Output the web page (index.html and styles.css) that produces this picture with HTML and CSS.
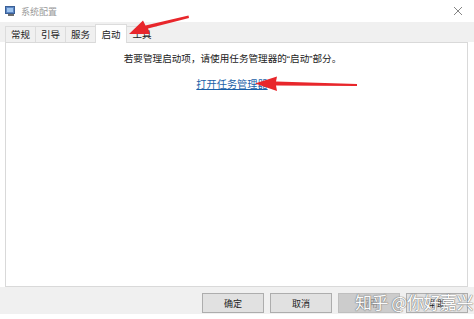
FILE: index.html
```html
<!DOCTYPE html>
<html>
	<head>
		<meta charset="utf-8">
		<title>系统配置</title>
		<link rel="stylesheet" href="styles.css">
	</head>
	<body>
		<div class="win">
			<div class="titlebar">
				<svg class="app_icon" width="11" height="11" viewBox="0 0 11 11">
					<rect x="0.5" y="0.5" width="9" height="7" fill="#5b86c4" stroke="#3a5f95"/>
					<rect x="2" y="2" width="6" height="4" fill="#9cc3ee"/>
					<rect x="3" y="8" width="6" height="2" fill="#6d6d6d"/>
				</svg>
				<span class="title">系统配置</span>
				<svg class="close" width="10" height="10" viewBox="0 0 10 10">
					<path d="M1 1L9 9M9 1L1 9" stroke="#777" stroke-width="0.9"/>
				</svg>
			</div>
			<div class="tabs">
				<div class="tab">常规</div>
				<div class="tab">引导</div>
				<div class="tab">服务</div>
				<div class="tab on">启动</div>
				<div class="tab">工具</div>
			</div>
			<div class="panel">
				<p class="tip">若要管理启动项，请使用任务管理器的<span class="q">“</span>启动<span class="q">”</span>部分。</p>
				<a class="link" href="#">打开任务管理器</a>
			</div>
			<div class="footer">
				<button class="btn">确定</button>
				<button class="btn">取消</button>
				<button class="btn off">应用</button>
				<button class="btn">帮助</button>
			</div>
			<div class="bottom_edge"></div>

			<svg class="arrows" width="474" height="319" viewBox="0 0 474 319">
				<path d="M189 18 L148 28.5 L150 34 L129 34 L143 20.5 L145.5 25.5 L188.5 15.5 Z" fill="#e8262b"/>
				<path d="M357 86 L276 85.5 L277 91 L255 83.5 L277 76.5 L276 81.5 L357 84 Z" fill="#e8262b"/>
			</svg>
			<div class="mark">知乎 @你好嘉兴</div>
		</div>
	</body>
</html>
```

FILE: styles.css
```css
*{
	margin: 0;
	padding: 0;
	box-sizing: border-box;
}
body{
	font-family: "Noto Sans CJK SC", "Microsoft YaHei", sans-serif;
	background: #ffffff;
}
.win{
	width: 474px;
	height: 319px;
	position: relative;
	overflow: hidden;
	display: flex;
	flex-direction: column;
}
.titlebar{
	height: 22px;
	display: flex;
	align-items: center;
	padding: 0 8px 0 5px;
	background: #ffffff;
}
.app_icon{
	margin-right: 5px;
}
.title{
	font-size: 9px;
	color: #999999;
}
.close{
	margin-left: auto;
	margin-right: 3px;
}
.tabs{
	height: 20px;
	background: #f0f0f0;
	display: flex;
	align-items: flex-end;
	padding-left: 5px;
}
.tab{
	height: 16px;
	padding: 0 5px;
	font-size: 9.5px;
	line-height: 15px;
	color: #222;
	border: 1px solid #dcdcdc;
	border-bottom: none;
	border-right: none;
	background: #f0f0f0;
	width: 30px;
	text-align: center;
}
.tab.on{
	height: 19px;
	background: #ffffff;
	line-height: 18px;
	border-right: 1px solid #dcdcdc;
	width: 32px;
	margin-bottom: -1px;
	position: relative;
}
.tab.on + .tab{
	border-left: none;
}
.panel{
	height: 245px;
	margin: 0 6px 0 5px;
	background: #ffffff;
	border: 1px solid #d9d9d9;
	display: flex;
	flex-direction: column;
	align-items: center;
	padding-top: 8px;
}
.tip{
	font-size: 9.6px;
	color: #1a1a1a;
	line-height: 14px;
	margin-left: -8px;
}
.tip .q{
	font-family: "Liberation Sans", sans-serif;
}
.link{
	margin-top: 11px;
	margin-left: -9px;
	font-size: 10.2px;
	line-height: 14px;
	color: #1a5fa8;
	text-decoration: underline;
}
.footer{
	height: 27px;
	background: #f0f0f0;
	display: flex;
	justify-content: flex-end;
	align-items: flex-start;
	gap: 6px;
	padding: 6px 6px 0 0;
}
.btn{
	width: 62px;
	height: 20px;
	font-family: inherit;
	font-size: 9px;
	color: #222;
	background: #e1e1e1;
	border: 1px solid #adadad;
}
.btn.off{
	background: #cccccc;
	color: #8a8a8a;
	border-color: #bfbfbf;
}
.bottom_edge{
	flex: 1;
	background: #ffffff;
}
.arrows{
	position: absolute;
	top: 0;
	left: 0;
}
.mark{
	position: absolute;
	left: 355px;
	top: 289px;
	font-size: 17px;
	color: #ffffff;
	text-shadow: 0 0 1px #777, 0 0 1px #777, 0 0 1px #777;
	letter-spacing: -0.5px;
	opacity: 0.9;
}
```
